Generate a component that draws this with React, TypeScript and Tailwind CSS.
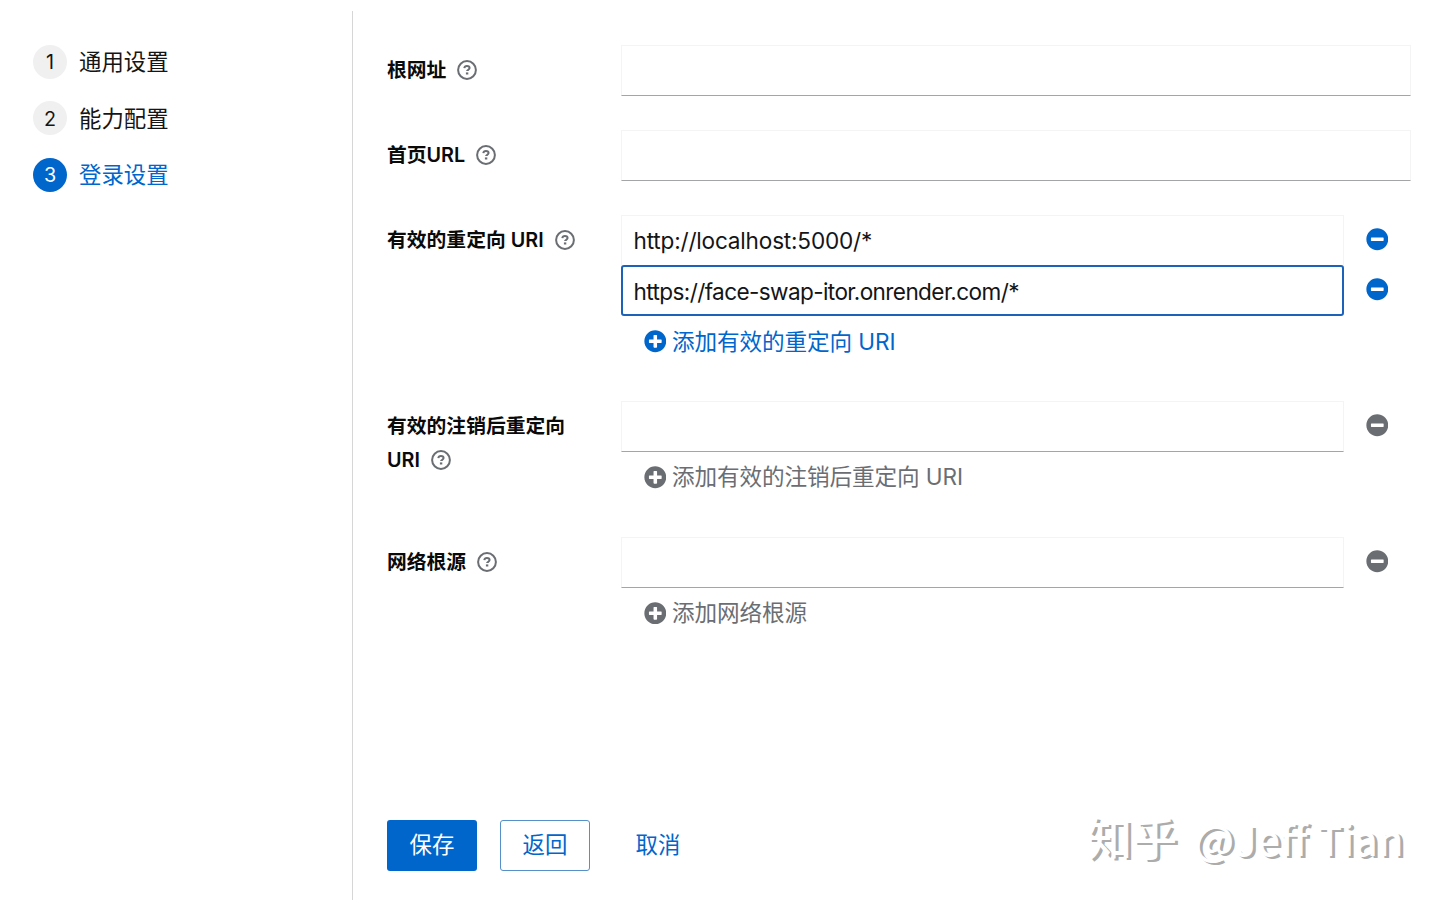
import React, { useState } from 'react';
import { FaMinusCircle, FaPlusCircle } from 'react-icons/fa';

const steps = ['通用设置', '能力配置', '登录设置'];

function HelpIcon() {
  return (
    <svg viewBox="0 0 20 20" className="ml-[11px] inline-block size-5 align-[-3px]" fill="none" stroke="#6a6e73" aria-hidden="true">
      <circle cx="10" cy="10" r="8.9" strokeWidth="2" />
      <path d="M7.3 8.2C7.5 6.8 8.5 6.1 9.9 6.1c1.6 0 2.7.7 2.7 2 0 1.7-2.5 1.6-2.5 3" strokeWidth="2" />
      <path d="M10.1 12.4v2.1" strokeWidth="2.4" />
    </svg>
  );
}

function Row({ label, children }: { label: string; children: React.ReactNode }) {
  return (
    <div className="flex">
      <div className="w-[234px] shrink-0 pt-[8px] pr-[40px] text-[19.8px] leading-[34px] font-semibold text-[#0a0a0a]">
        {label}
        <HelpIcon />
      </div>
      <div className="flex-1">{children}</div>
    </div>
  );
}

const inputClass = 'block h-[51px] w-full border border-[#f4f4f4] border-b-[#a3a5a7] bg-white px-[11.5px] text-[22.6px] text-[#151515] outline-none';

type UriListProps = { values: string[]; focused?: number; addLabel: string };

function UriList({ values: initial, focused, addLabel }: UriListProps) {
  const [values, setValues] = useState(initial);
  const filled = values.some(v => v !== '');
  const color = filled ? 'text-[#0066cc]' : 'text-[#6a6e73]';

  function onChange(index: number, value: string) {
    setValues(p => p.map((v, i) => (i === index ? value : v)));
  }

  return (
    <div>
      {values.map((value, i) => (
        <div key={i} className="flex h-[50.4px] items-start">
          <input
            value={value}
            onChange={e => onChange(i, e.target.value)}
            className={
              i === focused
                ? 'block h-[51px] w-[723px] rounded-[3px] border-2 border-[#1c62b9] bg-white px-[10.5px] pt-[2px] text-[22.6px] tracking-[-0.62px] text-[#151515] outline-none'
                : `${inputClass} max-w-[723px] tracking-[-0.2px] ${value ? 'border-b-transparent' : ''}`
            }
          />
          <button type="button" className={`ml-[21.5px] pt-[13px] ${color}`}>
            <FaMinusCircle size={22.6} />
          </button>
        </div>
      ))}
      <button type="button" className={`flex h-[51.4px] items-center gap-[6px] pl-[22.5px] text-[22.6px] tracking-[-0.1px] ${color}`}>
        <FaPlusCircle size={22.6} />
        {addLabel}
      </button>
    </div>
  );
}

export default function App() {
  return (
    <div className="relative flex h-[900px] w-[1440px] overflow-hidden bg-white pt-[11px] font-['Inter','Noto_Sans_CJK_SC',sans-serif]">
      <nav className="w-[353px] shrink-0 border-r border-[#d6d6d6] pt-[34px] pl-[33px]">
        <ol className="flex flex-col gap-[22.4px]">
          {steps.map((step, i) => (
            <li key={step} className={`flex h-[34px] items-center gap-[12px] text-[22.4px] ${i === 2 ? 'text-[#0066cc]' : 'text-[#151515]'}`}>
              <span className={`flex size-[34px] items-center justify-center rounded-full pt-[2px] text-[19.8px] ${i === 2 ? 'bg-[#0066cc] text-white' : 'bg-[#f0f0f0]'}`}>
                {i + 1}
              </span>
              {step}
            </li>
          ))}
        </ol>
      </nav>

      <main className="flex flex-1 flex-col pt-[34px] pr-[29px] pb-[29.5px] pl-[34px]">
        <form className="flex flex-1 flex-col gap-[34px]">
          <Row label="根网址"><input className={inputClass} /></Row>
          <Row label="首页URL"><input className={inputClass} /></Row>
          <Row label="有效的重定向 URI">
            <UriList
              values={['http://localhost:5000/*', 'https://face-swap-itor.onrender.com/*']}
              focused={1}
              addLabel="添加有效的重定向 URI"
            />
          </Row>
          <Row label="有效的注销后重定向 URI"><UriList values={['']} addLabel="添加有效的注销后重定向 URI" /></Row>
          <Row label="网络根源"><UriList values={['']} addLabel="添加网络根源" /></Row>
        </form>

        <footer className="flex gap-[23px] text-[22.4px]">
          <button type="button" className="h-[51px] w-[90px] rounded-[3px] bg-[#0066cc] pb-px text-white">保存</button>
          <button type="button" className="h-[51px] w-[90px] rounded-[3px] border border-[#5590c8] pb-px text-[#0066cc]">返回</button>
          <button type="button" className="h-[51px] w-[90px] pb-px text-[#0066cc]">取消</button>
        </footer>
      </main>

      <div className="absolute top-[808px] left-[1087px] flex items-baseline gap-[17px] leading-[58px] font-medium whitespace-nowrap text-white font-['Noto_Sans_CJK_SC',sans-serif] [text-shadow:3px_2px_0.5px_#acacac]">
        <span className="text-[45px]">知乎</span>
        <span className="text-[41.2px]">@Jeff Tian</span>
      </div>
    </div>
  );
}
